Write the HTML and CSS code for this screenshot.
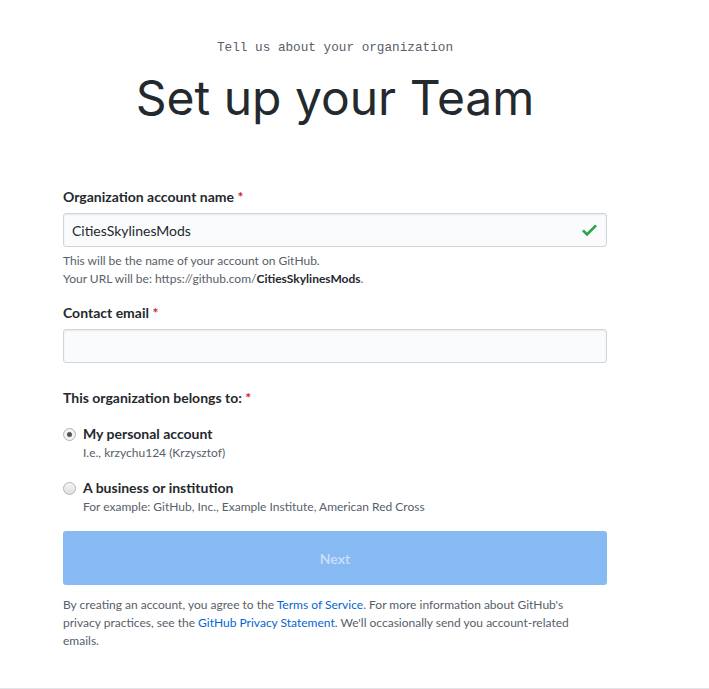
FILE: index.html
```html
<!DOCTYPE html>
<html>
<head>
<meta charset="utf-8">
<link rel="stylesheet" href="styles.css">
</head>
<body>
<div class="container">
  <header class="head">
    <p class="kicker">Tell us about your organization</p>
    <h1 class="title">Set up your Team</h1>
  </header>
  <form class="form">
    <div class="group">
      <label class="label">Organization account name <span class="req">*</span></label>
      <div class="input filled">
        <span class="value">CitiesSkylinesMods</span>
        <svg class="check" width="15" height="20" viewBox="0 0 12 16"><path fill="#28a745" fill-rule="evenodd" d="M12 5l-8 8-4-4 1.5-1.5L4 10l6.5-6.5L12 5z"/></svg>
      </div>
      <p class="note">This will be the name of your account on GitHub.<br>Your URL will be: https://github.com/<strong>CitiesSkylinesMods</strong>.</p>
    </div>
    <div class="group">
      <label class="label">Contact email <span class="req">*</span></label>
      <div class="input"></div>
    </div>
    <div class="group belongs">
      <label class="label">This organization belongs to: <span class="req">*</span></label>
      <div class="radio-row">
        <span class="radio checked"></span>
        <div>
          <div class="radio-label">My personal account</div>
          <div class="radio-note">I.e., krzychu124 (Krzysztof)</div>
        </div>
      </div>
      <div class="radio-row">
        <span class="radio"></span>
        <div>
          <div class="radio-label">A business or institution</div>
          <div class="radio-note">For example: GitHub, Inc., Example Institute, American Red Cross</div>
        </div>
      </div>
    </div>
    <button class="btn" type="button">Next</button>
    <p class="legal">By creating an account, you agree to the <a href="#">Terms of Service</a>. For more information about GitHub's<br>privacy practices, see the <a href="#">GitHub Privacy Statement</a>. We'll occasionally send you account-related<br>emails.</p>
  </form>
</div>
<div class="footer"></div>
</body>
</html>
```
FILE: styles.css
```css
html, body {
  margin: 0;
  padding: 0;
  background: #fff;
}
body {
  font-family: "Lato", "Noto Sans", sans-serif;
  color: #24292e;
  font-size: 14px;
}
.container {
  width: 544px;
  margin-left: 63px;
  height: 688px;
}
.head {
  text-align: center;
  padding-top: 39px;
}
.kicker {
  margin: 0;
  font-family: "Liberation Mono", monospace;
  font-size: 12.7px;
  line-height: 18px;
  color: #586069;
}
.title {
  margin: 11px 0 0;
  font-family: "Inter", sans-serif;
  font-weight: 400;
  font-size: 48px;
  line-height: 60px;
  color: #24292e;
}
.form {
  margin-top: 59px;
}
.group {
  margin-bottom: 14px;
}
.label {
  display: block;
  font-weight: 700;
  font-size: 14px;
  line-height: 20px;
  margin-bottom: 6px;
}
.req {
  color: #cb2431;
}
.input {
  box-sizing: border-box;
  height: 34px;
  border: 1px solid #d1d5da;
  border-radius: 3px;
  background: #fafbfc;
  display: flex;
  align-items: center;
  justify-content: space-between;
  padding: 0 9px 0 8px;
  box-shadow: inset 0 1px 2px rgba(27,31,35,0.075);
}
.value {
  font-size: 14px;
  color: #24292e;
}
.check {
  display: block;
}
.note {
  margin: 5px 0 0;
  font-size: 12px;
  line-height: 18px;
  color: #586069;
}
.note strong {
  color: #24292e;
  font-weight: 700;
}
.group:first-child {
  margin-bottom: 15px;
}
.belongs {
  margin-top: 25px;
}
.belongs .label {
  margin-bottom: 16px;
}
.radio-row {
  display: flex;
  align-items: flex-start;
  gap: 7px;
  margin-bottom: 16px;
}
.radio {
  box-sizing: border-box;
  width: 13px;
  height: 13px;
  border-radius: 50%;
  border: 1px solid #b5b5b5;
  background: linear-gradient(#f6f6f6, #dedede);
  margin-top: 4px;
  flex: none;
  position: relative;
}
.radio.checked {
  background: #f2f2f2;
}
.radio.checked::after {
  content: "";
  position: absolute;
  left: 3px;
  top: 3px;
  width: 5px;
  height: 5px;
  border-radius: 50%;
  background: #555;
}
.radio-label {
  font-weight: 700;
  font-size: 14px;
  line-height: 20px;
}
.radio-note {
  font-size: 12px;
  line-height: 18px;
  color: #586069;
}
.belongs .radio-row:last-child {
  margin-bottom: 15px;
}
.btn {
  display: block;
  width: 100%;
  height: 54px;
  border: 0;
  border-radius: 3px;
  background: #87b9f3;
  color: #c7ddf9;
  font-family: inherit;
  font-weight: 700;
  font-size: 14px;
  margin-top: 0;
}
.legal {
  margin: 11px 0 0;
  font-size: 12px;
  line-height: 18px;
  color: #586069;
}
.legal a {
  color: #0366d6;
  text-decoration: none;
}
.footer {
  border-top: 1px solid #e1e4e8;
  height: 1px;
}
```
